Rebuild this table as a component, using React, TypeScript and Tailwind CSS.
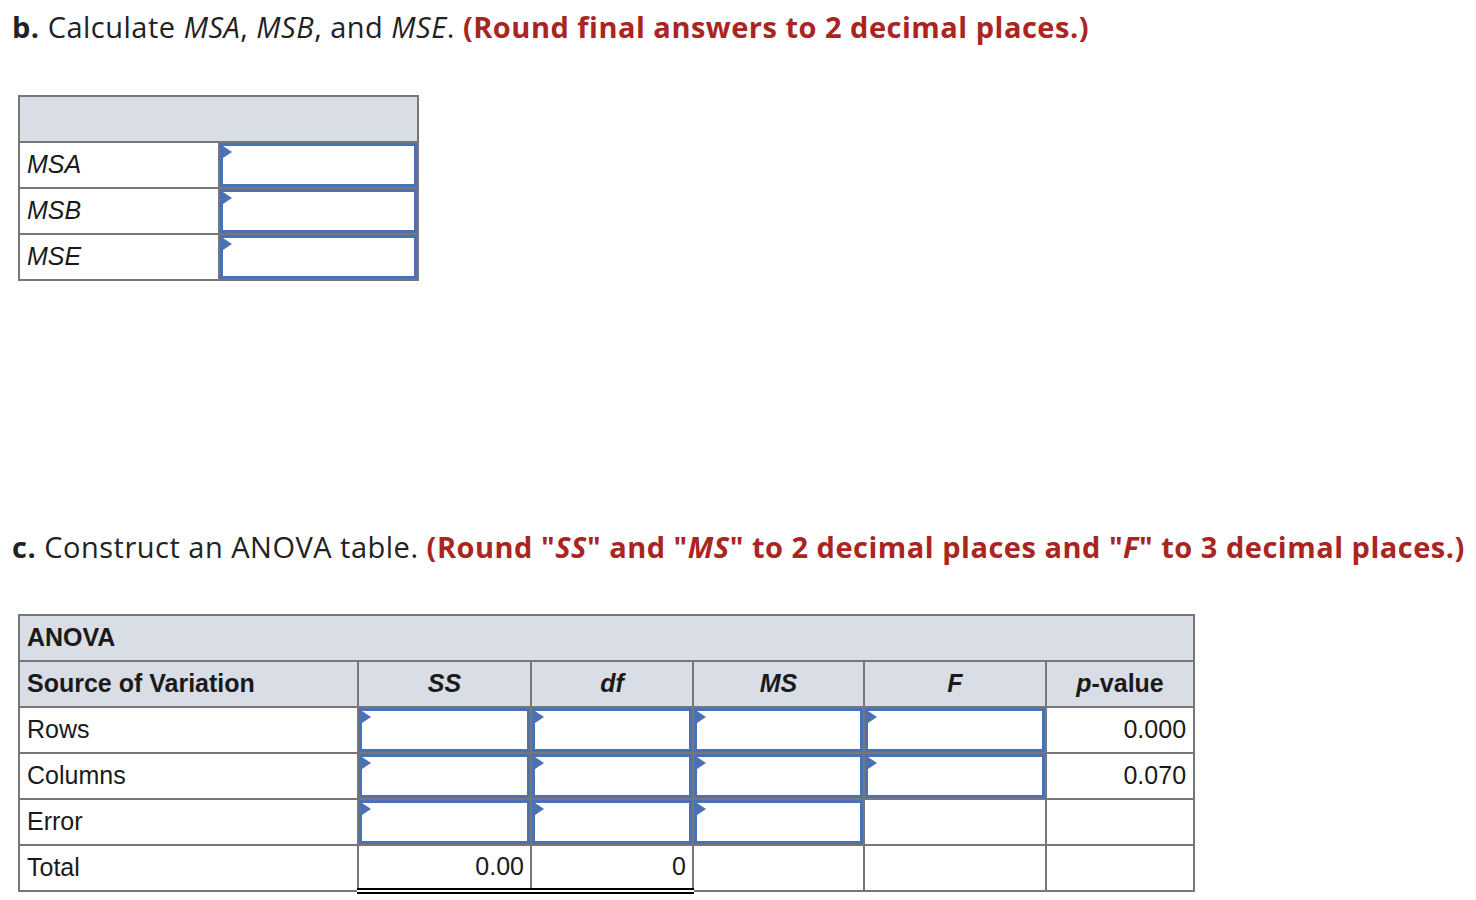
import React from 'react';

const head = { fontFamily: '"Open Sans", Lato, sans-serif' };

// blue answer box with the little marker in its corner
const InputBox = () => (
  <div className="relative h-full w-full border-[3px] border-[#4a72b2] bg-white">
    <span className="absolute left-0 top-0 h-0 w-0 border-y-[6px] border-l-[9px] border-y-transparent border-l-[#4a72b2]" />
  </div>
);

const Td = ({ children, className = '', colSpan }: { children?: React.ReactNode; className?: string; colSpan?: number }) => (
  <td
    colSpan={colSpan}
    className={`h-[46px] border-2 border-[#777] p-0 font-['Liberation_Sans',Arial,sans-serif] text-[25px] text-[#1a1a1a] ${className}`}
  >
    {children}
  </td>
);

const Input = () => (
  <Td>
    <div className="h-[44px]">
      <InputBox />
    </div>
  </Td>
);

const rows = [
  { name: 'Rows', inputs: 4, p: '0.000' },
  { name: 'Columns', inputs: 4, p: '0.070' },
  { name: 'Error', inputs: 3, p: '' },
];

const totalCell =
  "h-[46px] border-x-2 border-b-[6px] border-t-2 border-x-[#777] border-b-black border-t-black [border-bottom-style:double] p-0 text-right font-['Liberation_Sans',Arial,sans-serif] text-[25px] text-[#1a1a1a]";

export default function App() {
  return (
    <div className="min-h-screen bg-white pl-[12px] text-[#222]">
      {/* Part b */}
      <p className="pt-[8px] text-[29px] leading-[38px] tracking-[0.5px] text-[#222]" style={head}>
        <b>b.</b> Calculate <i>MSA</i>, <i>MSB</i>, and <i>MSE</i>.{' '}
        <b className="text-[#a8261f]">(Round final answers to 2 decimal places.)</b>
      </p>

      <table className="ml-[6px] mt-[49px] w-[401px] border-collapse">
        <tbody>
          <tr className="bg-[#d9dde5]">
            <Td colSpan={2} />
          </tr>
          {['MSA', 'MSB', 'MSE'].map((m) => (
            <tr key={m}>
              <Td className="w-[200px] pl-[7px] italic">{m}</Td>
              <Input />
            </tr>
          ))}
        </tbody>
      </table>

      {/* Part c */}
      <p className="mt-[247px] text-[29px] leading-[38px] tracking-[0.5px] text-[#222]" style={head}>
        <b>c.</b> Construct an ANOVA table.{' '}
        <b className="text-[#a8261f]">
          (Round "<i>SS</i>" and "<i>MS</i>" to 2 decimal places and "<i>F</i>" to 3 decimal places.)
        </b>
      </p>

      <table className="ml-[6px] mt-[48px] w-[1175px] table-fixed border-collapse">
        <colgroup>
          <col className="w-[339px]" />
          <col className="w-[173px]" />
          <col className="w-[162px]" />
          <col className="w-[171px]" />
          <col className="w-[182px]" />
          <col className="w-[148px]" />
        </colgroup>
        <tbody>
          <tr className="bg-[#d9dde5]">
            <Td colSpan={6} className="pl-[7px] font-bold">
              ANOVA
            </Td>
          </tr>
          <tr className="bg-[#d9dde5]">
            <Td className="pl-[7px] font-bold">Source of Variation</Td>
            <Td className="text-center font-bold italic">SS</Td>
            <Td className="text-center font-bold italic">df</Td>
            <Td className="text-center font-bold italic">MS</Td>
            <Td className="text-center font-bold italic">F</Td>
            <Td className="text-center font-bold">
              <i>p</i>-value
            </Td>
          </tr>
          {rows.map((r) => (
            <tr key={r.name}>
              <Td className="pl-[7px]">{r.name}</Td>
              {Array.from({ length: 4 }).map((_, i) =>
                i < r.inputs ? <Input key={i} /> : <Td key={i} />
              )}
              <Td className="pr-[7px] text-right">{r.p}</Td>
            </tr>
          ))}
          <tr>
            <Td className="pl-[7px]">Total</Td>
            <td className={totalCell}>
              <span className="pr-[6px]">0.00</span>
            </td>
            <td className={totalCell}>
              <span className="pr-[6px]">0</span>
            </td>
            <Td />
            <Td />
            <Td />
          </tr>
        </tbody>
      </table>
    </div>
  );
}
